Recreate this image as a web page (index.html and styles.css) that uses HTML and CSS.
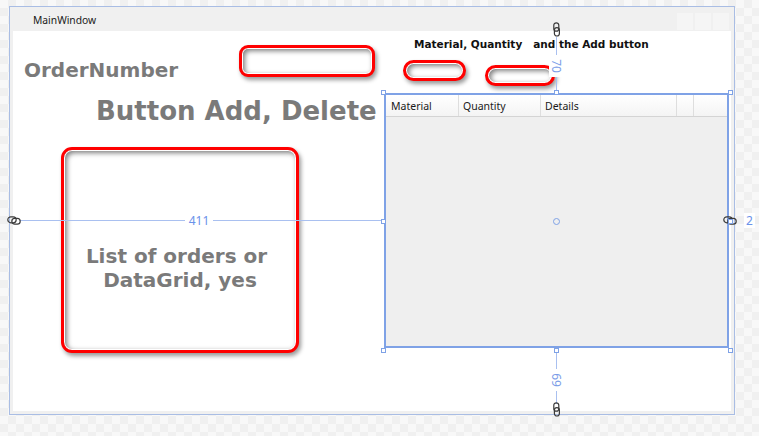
FILE: index.html
```html
<!DOCTYPE html>
<html>
<head>
<meta charset="utf-8">
<title>MainWindow designer</title>
<link rel="stylesheet" href="styles.css">
</head>
<body>
<div class="window">
  <div class="titlebar">
    <span class="title">MainWindow</span>
    <div class="caption-buttons">
      <span class="cap-btn"></span><span class="cap-btn"></span><span class="cap-btn"></span>
    </div>
  </div>
  <div class="client">
    <div class="label order-number">OrderNumber</div>
    <div class="redbox textbox"></div>
    <div class="label buttons-note">Button Add, Delete</div>
    <div class="small-note">Material, Quantity   and the Add button</div>
    <div class="redbox pill pill-1"></div>
    <div class="redbox pill pill-2"></div>
    <div class="redbox listbox">
      <div class="list-text">List of orders or<br>&nbsp;DataGrid, yes</div>
    </div>
    <div class="datagrid">
      <div class="grid-header">
        <div class="col">Material</div>
        <div class="col">Quantity</div>
        <div class="col">Details</div>
        <div class="col"></div>
        <div class="col last"></div>
      </div>
    </div>
  </div>
</div>

<div class="guides">
  <div class="hline"></div>
  <div class="gap-label lbl-411">411</div>
  <div class="vline vline-top"></div>
  <div class="rot-label lbl-70">70</div>
  <div class="vline vline-bottom"></div>
  <div class="rot-label lbl-69">69</div>
  <div class="num-label lbl-2">2</div>

  <svg class="link link-left" width="14" height="9" viewBox="0 0 14 9"><rect x="0.8" y="0.8" width="8.4" height="6" rx="3" fill="none" stroke="#3a3a3a" stroke-width="1.2"/><rect x="4.8" y="2.4" width="8.4" height="5.8" rx="2.9" fill="none" stroke="#3a3a3a" stroke-width="1.2"/></svg>
  <svg class="link link-right" width="14" height="9" viewBox="0 0 14 9"><rect x="0.8" y="0.8" width="8.4" height="6" rx="3" fill="none" stroke="#3a3a3a" stroke-width="1.2"/><rect x="4.8" y="2.4" width="8.4" height="5.8" rx="2.9" fill="none" stroke="#3a3a3a" stroke-width="1.2"/></svg>
  <svg class="link link-top" width="7" height="15" viewBox="0 0 7 15"><rect x="0.8" y="0.8" width="5" height="8.4" rx="2.5" fill="none" stroke="#3a3a3a" stroke-width="1.2"/><rect x="1.4" y="5.6" width="5" height="8.4" rx="2.5" fill="none" stroke="#3a3a3a" stroke-width="1.2"/></svg>
  <svg class="link link-bottom" width="7" height="15" viewBox="0 0 7 15"><rect x="0.8" y="0.8" width="5" height="8.4" rx="2.5" fill="none" stroke="#3a3a3a" stroke-width="1.2"/><rect x="1.4" y="5.6" width="5" height="8.4" rx="2.5" fill="none" stroke="#3a3a3a" stroke-width="1.2"/></svg>

  <span class="handle h-tl"></span>
  <span class="handle h-tm"></span>
  <span class="handle h-tr"></span>
  <span class="handle h-ml"></span>
  <span class="handle h-mr"></span>
  <span class="handle h-bl"></span>
  <span class="handle h-bm"></span>
  <span class="handle h-br"></span>
  <span class="center-dot"></span>
</div>
</body>
</html>
```

FILE: styles.css
```css
html, body {
  margin: 0;
  padding: 0;
}
body {
  width: 759px;
  height: 436px;
  position: relative;
  overflow: hidden;
  font-family: "DejaVu Sans", Verdana, sans-serif;
  background-color: #f8f8f8;
  background-image: conic-gradient(#f0f0f0 25%, transparent 0 50%, #f0f0f0 0 75%, transparent 0);
  background-size: 16px 16px;
}

/* ---------- window frame ---------- */
.window {
  box-sizing: border-box;
  margin: 6px 0 0 9px;
  width: 726px;
  height: 409px;
  border: 1px solid #a9bde4;
  background: #f0f0f0;
  padding: 0 3px 3px 3px;
  display: flex;
  flex-direction: column;
}
.titlebar {
  height: 24px;
  flex: none;
  display: flex;
  align-items: center;
  justify-content: space-between;
  padding-left: 20px;
}
.title {
  font-family: "Noto Sans", "Open Sans", sans-serif;
  font-size: 10.3px;
  color: #1a1a1a;
  margin-top: 2px;
}
.caption-buttons {
  display: flex;
  gap: 2px;
  margin-right: 2px;
  margin-top: 6px;
  align-self: flex-start;
}
.cap-btn {
  width: 16px;
  height: 17px;
  background: #f5f5f5;
}
.client {
  flex: 1;
  background: #ffffff;
  position: relative;
}

/* ---------- designer canvas elements ---------- */
.label {
  position: absolute;
  font-weight: bold;
  color: #7a7a7a;
  white-space: nowrap;
}
.order-number {
  left: 11px;
  top: 27px;
  font-size: 20px;
  line-height: 24px;
}
.buttons-note {
  left: 83px;
  top: 65px;
  font-size: 26px;
  line-height: 30px;
}
.small-note {
  position: absolute;
  left: 401px;
  top: 7px;
  font-size: 10.5px;
  line-height: 13px;
  font-weight: bold;
  color: #111;
  white-space: pre;
}

.redbox {
  position: absolute;
  box-sizing: border-box;
  border: 3px solid #ff0000;
  background: #ffffff;
  box-shadow:
    2px 3px 4px rgba(0, 0, 0, 0.4),
    inset 0 0 0 1px #ffffff,
    inset 2px 2px 5px 1px rgba(0, 0, 0, 0.5);
}
.textbox {
  left: 226px;
  top: 14px;
  width: 136px;
  height: 32px;
  border-radius: 9px;
}
.pill {
  border-radius: 11px;
  height: 21px;
}
.pill-1 {
  left: 390px;
  top: 29px;
  width: 63px;
}
.pill-2 {
  left: 472px;
  top: 34px;
  width: 70px;
}
.listbox {
  left: 48px;
  top: 116px;
  width: 238px;
  height: 206px;
  border-radius: 11px;
  display: flex;
  justify-content: center;
  padding-top: 94px;
}
.list-text {
  font-weight: bold;
  font-size: 20px;
  line-height: 24px;
  color: #7a7a7a;
  text-align: center;
  margin-right: 7px;
}

.datagrid {
  position: absolute;
  left: 371px;
  top: 62px;
  width: 345px;
  height: 255px;
  box-sizing: border-box;
  border: 2px solid #7fa2e6;
  background: #efefef;
}
.grid-header {
  display: grid;
  grid-template-columns: 73px 82px 136px 17px 1fr;
  height: 21px;
  border-bottom: 1px solid #d4d4d4;
  background: linear-gradient(#ffffff, #f4f4f4);
  font-family: "Noto Sans", "Open Sans", sans-serif;
  font-size: 10.5px;
  color: #1a1a1a;
}
.col {
  box-sizing: border-box;
  border-right: 1px solid #dedede;
  padding: 2px 0 0 4px;
  line-height: 19px;
  white-space: nowrap;
  overflow: hidden;
}
.col:first-child {
  padding-left: 5px;
}
.col.last {
  border-right: none;
}

/* ---------- designer adorners (overlay) ---------- */
.guides {
  position: absolute;
  inset: 0;
  pointer-events: none;
}
.hline {
  position: absolute;
  left: 20px;
  top: 220px;
  width: 363px;
  height: 1px;
  background: #a9c0f0;
}
.gap-label {
  position: absolute;
  left: 185px;
  top: 213px;
  width: 28px;
  height: 15px;
  background: #fff;
  color: #6b92ea;
  font-family: "Noto Sans", sans-serif;
  font-size: 12px;
  line-height: 15px;
  text-align: center;
}
.vline {
  position: absolute;
  left: 556px;
  width: 1px;
  background: #a9c0f0;
}
.vline-top {
  top: 37px;
  height: 55px;
}
.vline-bottom {
  top: 352px;
  height: 52px;
}
.rot-label {
  position: absolute;
  width: 22px;
  height: 14px;
  background: #fff;
  color: #7b9de8;
  font-family: "Noto Sans", sans-serif;
  font-size: 12px;
  line-height: 14px;
  text-align: center;
  transform: rotate(90deg);
}
.lbl-70 {
  left: 545px;
  top: 59px;
}
.lbl-69 {
  left: 545px;
  top: 373px;
}
.num-label {
  position: absolute;
  left: 744px;
  top: 213px;
  width: 11px;
  height: 15px;
  background: #fff;
  color: #6b92ea;
  font-family: "Noto Sans", sans-serif;
  font-size: 12px;
  line-height: 15px;
  text-align: center;
}
.link {
  position: absolute;
  display: block;
}
.link-left {
  left: 7px;
  top: 216px;
}
.link-right {
  left: 723px;
  top: 216px;
}
.link-top {
  left: 553px;
  top: 22px;
}
.link-bottom {
  left: 553px;
  top: 402px;
}
.handle {
  position: absolute;
  width: 5px;
  height: 5px;
  box-sizing: border-box;
  border: 1px solid #7fa2e6;
  background: #fff;
}
.h-tl { left: 381px; top: 90px; }
.h-tm { left: 554px; top: 90px; }
.h-tr { left: 728px; top: 90px; }
.h-ml { left: 381px; top: 219px; }
.h-mr { left: 728px; top: 219px; }
.h-bl { left: 381px; top: 348px; }
.h-bm { left: 554px; top: 348px; }
.h-br { left: 728px; top: 348px; }
.center-dot {
  position: absolute;
  left: 553px;
  top: 218px;
  width: 7px;
  height: 7px;
  box-sizing: border-box;
  border: 1px solid #7fa2e6;
  border-radius: 50%;
}
```
